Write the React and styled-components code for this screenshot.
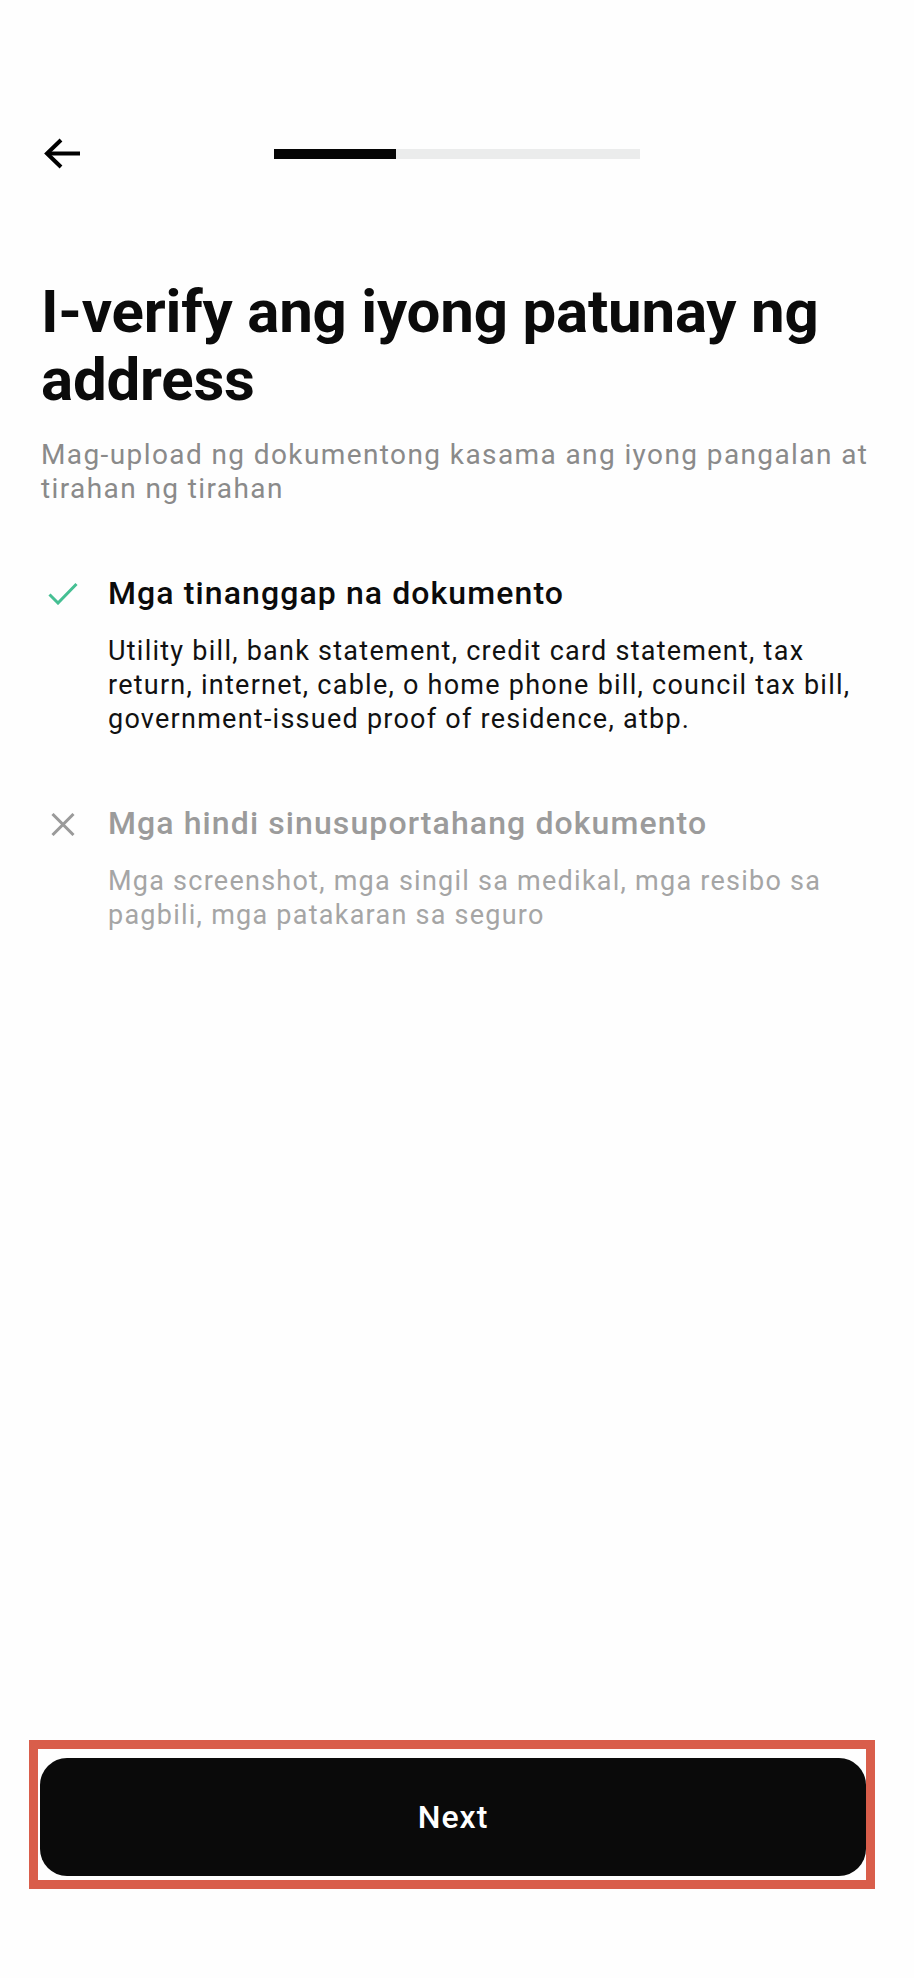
import styled, { createGlobalStyle } from "styled-components";

const GlobalStyle = createGlobalStyle`
  html, body {
    margin: 0;
    padding: 0;
    background: #fefefe;
  }
  body {
    font-family: Roboto, "Noto Sans", "Liberation Sans", sans-serif;
    -webkit-font-smoothing: antialiased;
  }
`;

const Page = styled.div`
  min-height: 100vh;
  display: flex;
  flex-direction: column;
  box-sizing: border-box;
`;

const Header = styled.header`
  display: grid;
  grid-template-columns: 1fr auto 1fr;
  align-items: center;
  padding: 138px 0 0 43px;
  height: 31px;
`;

const BackButton = styled.button`
  display: flex;
  padding: 0;
  border: none;
  background: none;
  justify-self: start;
  cursor: pointer;
`;

const Progress = styled.div`
  width: 366px;
  height: 10px;
  background: #ebecec;
  margin-left: -43px;
`;

const ProgressFill = styled.div`
  height: 100%;
  background: #050505;
`;

const Content = styled.main`
  padding: 109px 41px 0 41px;
`;

const Title = styled.h1`
  margin: 0;
  font-size: 60px;
  line-height: 68px;
  font-weight: 700;
  color: #0b0b0b;
  letter-spacing: -0.2px;
`;

const Subtitle = styled.p`
  margin: 24px 0 0;
  font-size: 28px;
  line-height: 34px;
  font-weight: 400;
  letter-spacing: 1.4px;
  color: #8a8a8a;
`;

const List = styled.div`
  display: flex;
  flex-direction: column;
  gap: 69px;
  margin-top: 69px;
`;

const Item = styled.div`
  display: grid;
  grid-template-columns: 67px 1fr;
`;

const IconCell = styled.div`
  padding: ${(p) => p.$top}px 0 0 ${(p) => p.$left}px;
`;

const ItemTitle = styled.h2`
  margin: 0;
  font-size: 32px;
  line-height: 36px;
  font-weight: 500;
  letter-spacing: 1.1px;
  color: ${(p) => (p.$muted ? "#9b9b9b" : "#0b0b0b")};
`;

const ItemText = styled.p`
  margin: 23px 0 0;
  font-size: 27px;
  line-height: 34px;
  font-weight: 400;
  letter-spacing: 1.25px;
  color: ${(p) => (p.$muted ? "#a5a5a5" : "#111111")};
`;

const Footer = styled.footer`
  margin-top: auto;
  padding: 0 0 89px 29px;
`;

const Highlight = styled.div`
  width: 846px;
  box-sizing: border-box;
  border: 9px solid #d95e4b;
  padding: 9px 0 4px 2px;
`;

const NextButton = styled.button`
  width: 826px;
  height: 118px;
  border: none;
  border-radius: 27px;
  background: #0a0a0a;
  color: #ffffff;
  font-family: Roboto, "Noto Sans", "Liberation Sans", sans-serif;
  font-size: 32px;
  font-weight: 500;
  letter-spacing: 1px;
  cursor: pointer;
`;

const ArrowIcon = () => (
  <svg width="38" height="31" viewBox="0 0 38 31" fill="none">
    <path d="M4 15.5H37" stroke="#000" strokeWidth="4" />
    <path d="M18 2L4 15.5L18 29" stroke="#000" strokeWidth="4" strokeLinejoin="miter" />
  </svg>
);

const CheckIcon = () => (
  <svg width="30" height="23" viewBox="0 0 30 23" fill="none">
    <path d="M1.5 12.5L10 21L28.5 2" stroke="#45bf93" strokeWidth="3" />
  </svg>
);

const CrossIcon = () => (
  <svg width="24" height="23" viewBox="0 0 24 23" fill="none">
    <path d="M1.5 1L22.5 22M22.5 1L1.5 22" stroke="#9a9a9a" strokeWidth="3" />
  </svg>
);

const items = [
  {
    icon: <CheckIcon />,
    left: 7,
    top: 7,
    title: "Mga tinanggap na dokumento",
    text: "Utility bill, bank statement, credit card statement, tax return, internet, cable, o home phone bill, council tax bill, government-issued proof of residence, atbp.",
  },
  {
    icon: <CrossIcon />,
    left: 10,
    top: 8,
    muted: true,
    title: "Mga hindi sinusuportahang dokumento",
    text: "Mga screenshot, mga singil sa medikal, mga resibo sa pagbili, mga patakaran sa seguro",
  },
];

export default function App() {
  const step = 1;
  const steps = 3;

  return (
    <Page>
      <GlobalStyle />
      <Header>
        <BackButton aria-label="Back">
          <ArrowIcon />
        </BackButton>
        <Progress>
          <ProgressFill style={{ width: `${(step / steps) * 100}%` }} />
        </Progress>
        <span />
      </Header>
      <Content>
        <Title>I-verify ang iyong patunay ng address</Title>
        <Subtitle>
          Mag-upload ng dokumentong kasama ang iyong pangalan at tirahan ng tirahan
        </Subtitle>
        <List>
          {items.map((item) => (
            <Item key={item.title}>
              <IconCell $left={item.left} $top={item.top}>
                {item.icon}
              </IconCell>
              <div>
                <ItemTitle $muted={item.muted}>{item.title}</ItemTitle>
                <ItemText $muted={item.muted}>{item.text}</ItemText>
              </div>
            </Item>
          ))}
        </List>
      </Content>
      <Footer>
        <Highlight>
          <NextButton>Next</NextButton>
        </Highlight>
      </Footer>
    </Page>
  );
}
